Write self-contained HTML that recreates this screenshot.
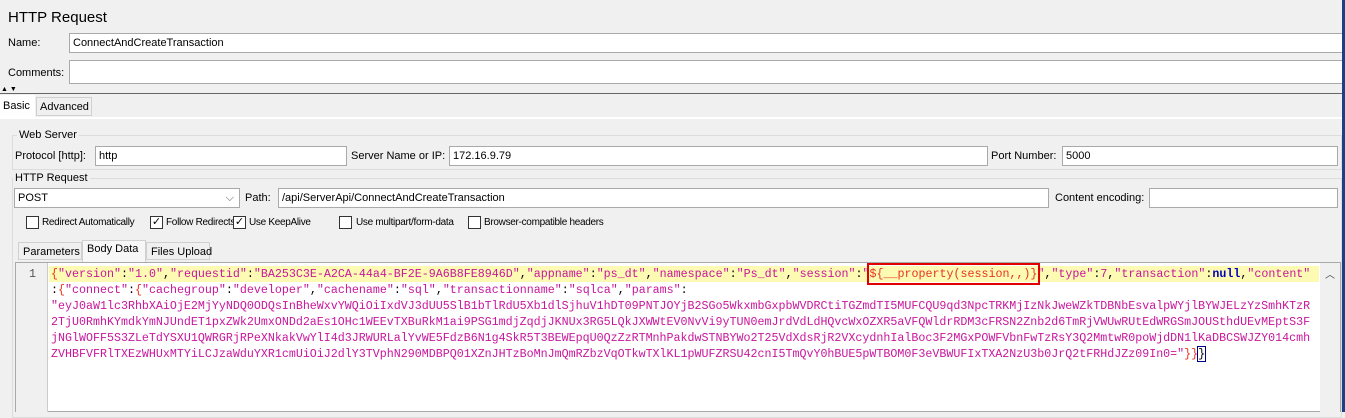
<!DOCTYPE html>
<html><head><meta charset="utf-8"><style>
*{box-sizing:border-box;margin:0;padding:0}
body{width:1345px;height:412px;background:#f0f0f0;position:relative;overflow:hidden;font-family:"Liberation Sans",Arial,sans-serif;font-size:11px;color:#000}
.a{position:absolute;white-space:nowrap}
.in{position:absolute;background:#fff;border:1px solid #a9a9a9;padding-left:3px;line-height:18px;font-size:11px;white-space:nowrap}
.grp{position:absolute;border:1px solid #dcdcdc}
.gl{position:absolute;background:#f0f0f0;padding:0 2px;font-size:11px}
.cb{position:absolute;top:216px;width:13px;height:13px;border:1px solid #333;background:#fff;font-size:11px;line-height:11px;text-align:center}
.cl{position:absolute;top:217px;font-size:10px;letter-spacing:-0.3px;white-space:nowrap}
.code{position:absolute;left:51px;font-family:"Liberation Mono",monospace;font-size:11.67px;line-height:16px;white-space:pre;color:#c8169c}
.p{color:#000}.b{color:#e8331f}.n{color:#0000c0;font-weight:bold}
</style></head><body>
<div class="a" style="left:8px;top:9px;font-size:15px">HTTP Request</div>
<div class="a" style="left:8px;top:37px">Name:</div>
<div class="in" style="left:69px;top:33px;width:1275px;height:20px">ConnectAndCreateTransaction</div>
<div class="a" style="left:8px;top:67px">Comments:</div>
<div class="in" style="left:69px;top:60px;width:1275px;height:24px"></div>
<div class="a" style="left:1px;top:86px;font-size:7px">▲ ▼</div>
<div class="a" style="left:0;top:93px;width:1342px;height:1px;background:#666"></div>
<div class="a" style="left:0;top:95px;width:35px;height:23px;background:#fff;padding:5px 0 0 3px">Basic</div>
<div class="a" style="left:36px;top:97px;width:56px;height:19px;border:1px solid #d0d0d0;padding:3px 0 0 3px">Advanced</div>
<div class="a" style="left:0;top:117px;width:1342px;height:2px;background:#fff"></div>
<div class="grp" style="left:12px;top:135px;width:1330px;height:35px"></div>
<div class="gl" style="left:17px;top:129px">Web Server</div>
<div class="a" style="left:15px;top:150px">Protocol [http]:</div>
<div class="in" style="left:95px;top:146px;width:252px;height:20px">http</div>
<div class="a" style="left:351px;top:150px">Server Name or IP:</div>
<div class="in" style="left:449px;top:146px;width:539px;height:20px">172.16.9.79</div>
<div class="a" style="left:991px;top:150px">Port Number:</div>
<div class="in" style="left:1062px;top:146px;width:276px;height:20px">5000</div>
<div class="grp" style="left:12px;top:178px;width:1330px;height:240px"></div>
<div class="gl" style="left:13px;top:172px">HTTP Request</div>
<div class="in" style="left:14px;top:188px;width:226px;height:20px">POST<span style="position:absolute;right:5px;color:#555">⌵</span></div>
<div class="a" style="left:245px;top:192px">Path:</div>
<div class="in" style="left:278px;top:188px;width:771px;height:20px">/api/ServerApi/ConnectAndCreateTransaction</div>
<div class="a" style="left:1055px;top:192px">Content encoding:</div>
<div class="in" style="left:1149px;top:188px;width:189px;height:20px"></div>
<div class="cb" style="left:26px"></div><div class="cl" style="left:42px">Redirect Automatically</div>
<div class="cb" style="left:150px">✓</div><div class="cl" style="left:166px">Follow Redirects</div>
<div class="cb" style="left:233px">✓</div><div class="cl" style="left:249px">Use KeepAlive</div>
<div class="cb" style="left:339px"></div><div class="cl" style="left:356px">Use multipart/form-data</div>
<div class="cb" style="left:468px"></div><div class="cl" style="left:484px">Browser-compatible headers</div>
<div class="a" style="left:18px;top:242px;width:64px;height:18px;border:1px solid #d0d0d0;padding:3px 0 0 4px">Parameters</div>
<div class="a" style="left:82px;top:240px;width:64px;height:22px;border:1px solid #d0d0d0;border-bottom:none;background:#f7f7f7;padding:2px 0 0 4px">Body Data</div>
<div class="a" style="left:146px;top:242px;width:64px;height:18px;border:1px solid #d0d0d0;padding:3px 0 0 4px">Files Upload</div>
<div class="a" style="left:15px;top:262px;width:1326px;height:150px;background:#fff;border:1px solid #a9a9a9"></div>
<div class="a" style="left:16px;top:263px;width:32px;height:149px;background:#f0f0f0;border-right:1px solid #ccc"></div>
<div class="a" style="left:29px;top:267px;font-family:'Liberation Mono',monospace;font-size:11.67px;color:#555">1</div>
<div class="a" style="left:49px;top:266px;width:1270px;height:16px;background:#fdfbb3"></div>
<div class="a" style="left:1320px;top:263px;width:20px;height:149px;background:#f0f0f0"></div>
<div class="a" style="left:1325px;top:266px;font-size:10px;color:#444">︿</div>
<div class="a" style="left:1342px;top:0;width:3px;height:412px;background:#1c3f88"></div>
<div class="code" style="top:266px"><span class="b">{</span>"version"<span class="p">:</span>"1.0"<span class="p">,</span>"requestid"<span class="p">:</span>"BA253C3E-A2CA-44a4-BF2E-9A6B8FE8946D"<span class="p">,</span>"appname"<span class="p">:</span>"ps_dt"<span class="p">,</span>"namespace"<span class="p">:</span>"Ps_dt"<span class="p">,</span>"session"<span class="p">:</span>"<span class="b">${__property(session,,)}</span>"<span class="p">,</span>"type"<span class="p">:</span>7<span class="p">,</span>"transaction"<span class="p">:</span><span class="n">null</span><span class="p">,</span>"content"
<span class="p">:</span><span class="b">{</span>"connect"<span class="p">:</span><span class="b">{</span>"cachegroup"<span class="p">:</span>"developer"<span class="p">,</span>"cachename"<span class="p">:</span>"sql"<span class="p">,</span>"transactionname"<span class="p">:</span>"sqlca"<span class="p">,</span>"params"<span class="p">:</span>
"eyJ0aW1lc3RhbXAiOjE2MjYyNDQ0ODQsInBheWxvYWQiOiIxdVJ3dUU5SlB1bTlRdU5Xb1dlSjhuV1hDT09PNTJOYjB2SGo5WkxmbGxpbWVDRCtiTGZmdTI5MUFCQU9qd3NpcTRKMjIzNkJweWZkTDBNbEsvalpWYjlBYWJELzYzSmhKTzR
2TjU0RmhKYmdkYmNJUndET1pxZWk2UmxONDd2aEs1OHc1WEEvTXBuRkM1ai9PSG1mdjZqdjJKNUx3RG5LQkJXWWtEV0NvVi9yTUN0emJrdVdLdHQvcWxOZXR5aVFQWldrRDM3cFRSN2Znb2d6TmRjVWUwRUtEdWRGSmJOUSthdUEvMEptS3F
jNGlWOFF5S3ZLeTdYSXU1QWRGRjRPeXNkakVwYlI4d3JRWURLalYvWE5FdzB6N1g4SkR5T3BEWEpqU0QzZzRTMnhPakdwSTNBYWo2T25VdXdsRjR2VXcydnhIalBoc3F2MGxPOWFVbnFwTzRsY3Q2MmtwR0poWjdDN1lKaDBCSWJZY014cmh
ZVHBFVFRlTXEzWHUxMTYiLCJzaWduYXR1cmUiOiJ2dlY3TVphN290MDBPQ01XZnJHTzBoMnJmQmRZbzVqOTkwTXlKL1pWUFZRSU42cnI5TmQvY0hBUE5pWTBOM0F3eVBWUFIxTXA2NzU3b0JrQ2tFRHdJZz09In0="<span class="b">}}</span><span style="color:#000;outline:1px solid #00008b">}</span></div>
<div class="a" style="left:867px;top:263px;width:173px;height:22px;border:2px solid #e00000"></div>
</body></html>
